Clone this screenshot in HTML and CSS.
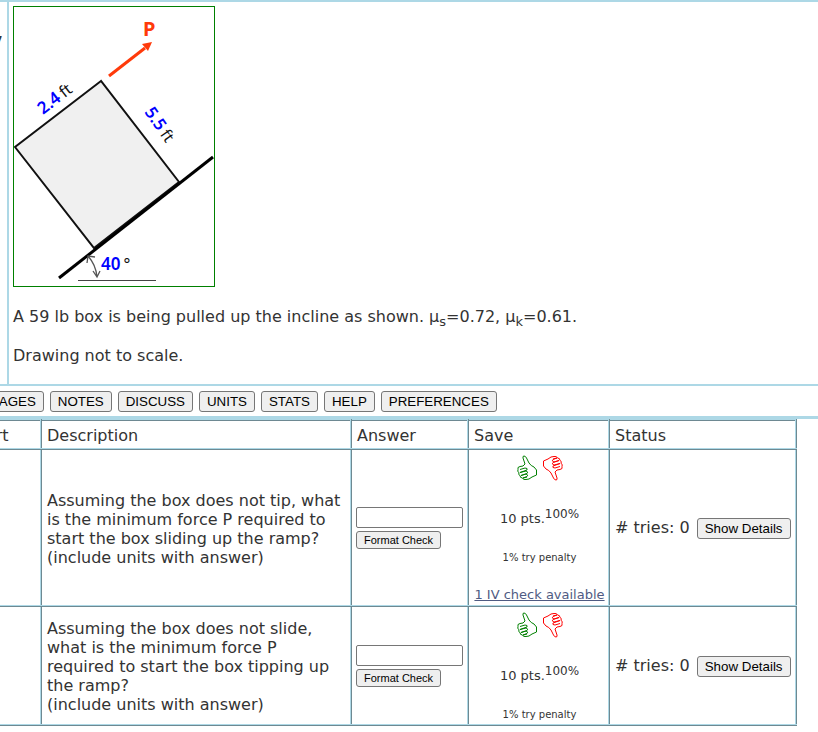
FILE: index.html
```html
<!DOCTYPE html>
<html lang="en">
<head>
    <meta charset="UTF-8" />
    <title>Homework</title>
    <link rel="stylesheet" href="styles.css">
</head>
<body>
    <svg class="defs" aria-hidden="true">
        <symbol id="thumb" viewBox="0 0 20 26">
            <path d="M3 11.500 L6 11 L8 9 L6 3 Q5.500 1 7 1 Q8.500 1 9.500 3 L12 8 Q14 11 17 12 L19.500 15 L19.500 20 L15 22 L12 24 L9 24.500 Q6 25 5.500 23 Q3 23 3 20.500 Q1 20 2 17.500 Q0 17 1 14.500 Q0 12 3 11.500 M3 14.500 L8 13 Q11 13 10 15 L3 17.500 M3 17.500 L9 16 Q12 17 10 18.500 L4 20.500 M4 20.500 L9 19 Q12 20 10 21.500 L6 23 M6 23 L10 22" />
        </symbol>
    </svg>
    <div id="wrap">
        <div class="problem">
            <div class="number">7</div>
            <div class="content">
                <svg class="figure" viewBox="0 0 200 279">
                    <path d="M87 74 L1 140 L80 241 L165 175 Z" fill="#f0f0f0" stroke="#111" stroke-width="2" />
                    <path d="M45 271 L199 150" stroke="#000" stroke-width="3" />
                    <path d="M64 273.500 H142" stroke="#444" />
                    <path d="M95 69 L131 41" stroke="#ff3a0a" stroke-width="3" />
                    <path d="M138 35 L128 37 L134 44 Z" fill="#ff3a0a" />
                    <path d="M74 249 Q82 258 83 270 M73 256 L74 249 L81 250 M79 264 L83 270 L86 264" fill="none" stroke="#555" stroke-width="1.300" />
                    <text class="force" x="129" y="29">P</text>
                    <text class="size" transform="translate(29 108) rotate(-38)">2.4<tspan class="unit" dx="3">ft</tspan></text>
                    <text class="size" transform="translate(130 105) rotate(55)">5.5<tspan class="unit" dx="3">ft</tspan></text>
                    <text class="size" x="87" y="263">40<tspan class="unit" dx="3">°</tspan></text>
                </svg>
                <p>A 59 lb box is being pulled up the incline as shown. μ<sub>s</sub>=0.72, μ<sub>k</sub>=0.61.</p>
                <p>Drawing not to scale.</p>
            </div>
        </div>
        <div class="toolbar">
            <button>MESSAGES</button>
            <button>NOTES</button>
            <button>DISCUSS</button>
            <button>UNITS</button>
            <button>STATS</button>
            <button>HELP</button>
            <button>PREFERENCES</button>
        </div>
        <table>
            <tr>
                <th class="part">Part</th>
                <th class="desc">Description</th>
                <th class="answer">Answer</th>
                <th class="save">Save</th>
                <th class="status">Status</th>
            </tr>
            <tr>
                <td></td>
                <td><label for="a1">Assuming the box does not tip, what is the minimum force P required to start the box sliding up the ramp?<br>(include units with answer)</label></td>
                <td class="entry">
                    <input type="text" id="a1">
                    <button class="format">Format Check</button>
                </td>
                <td class="points">
                    <div class="thumbs">
                        <svg class="up"><use href="#thumb" /></svg>
                        <svg class="down"><use href="#thumb" /></svg>
                    </div>
                    <div class="pts">10 pts.<sup>100%</sup></div>
                    <div class="penalty">1% try penalty</div>
                    <a href="#">1 IV check available</a>
                </td>
                <td class="tries"># tries: 0 <button>Show Details</button></td>
            </tr>
            <tr>
                <td></td>
                <td><label for="a2">Assuming the box does not slide, what is the minimum force P required to start the box tipping up the ramp?<br>(include units with answer)</label></td>
                <td class="entry">
                    <input type="text" id="a2">
                    <button class="format">Format Check</button>
                </td>
                <td class="points">
                    <div class="thumbs">
                        <svg class="up"><use href="#thumb" /></svg>
                        <svg class="down"><use href="#thumb" /></svg>
                    </div>
                    <div class="pts">10 pts.<sup>100%</sup></div>
                    <div class="penalty">1% try penalty</div>
                </td>
                <td class="tries"># tries: 0 <button>Show Details</button></td>
            </tr>
        </table>
    </div>
</body>
</html>
```

FILE: styles.css
```css
body{
    margin: 0;
    overflow: hidden;
    background: #fff;
    color: #333;
    font: 16px/19px Verdana, "DejaVu Sans", sans-serif;
}
.defs{
    position: absolute;
    width: 0;
    height: 0;
}
#wrap{
    margin-left: -30px;
}
.problem{
    display: flex;
    border-top: 2px solid lightblue;
    border-bottom: 2px solid lightblue;
}
.number{
    width: 33px;
    padding: 31px 0 0;
    box-sizing: border-box;
    text-align: right;
    margin-right: 4px;
}
.content{
    flex: 1;
    padding: 4px 4px 0;
    border-left: 2px solid lightblue;
}
.figure{
    display: block;
    width: 200px;
    height: 279px;
    border: 1px solid green;
    font-family: "Noto Sans", sans-serif;
}
.force{
    font-size: 20px;
    font-weight: bold;
    fill: #ff3a0a;
}
.size{
    font-size: 17px;
    font-weight: 600;
    fill: #00f;
}
.unit{
    font-size: 16px;
    font-weight: normal;
    fill: #111;
}
p{
    margin: 20px 0 19px;
}
sub, sup{
    font-size: 13px;
    line-height: 0;
}
button{
    font-family: "Liberation Sans", Arial, sans-serif;
    color: #000;
    background: #efefef;
    border: 1px solid #767676;
    border-radius: 3px;
    padding: 2px 7px;
}
.toolbar{
    display: flex;
    gap: 6px;
    margin-left: -17px;
    padding: 5px 0 4px;
    border-bottom: 3px solid lightblue;
}
table{
    border-collapse: collapse;
}
th, td{
    border: 2px ridge lightblue;
    padding: 5px 3px 3px 5px;
    text-align: left;
    font-weight: normal;
}
.part{
    width: 60px;
}
.desc{
    width: 300px;
}
.answer{
    width: 107px;
}
.save{
    width: 131px;
}
.status{
    width: 177px;
}
.entry{
    padding: 4px;
}
input{
    display: block;
    box-sizing: border-box;
    width: 107px;
    height: 21px;
    border: 1px solid #767676;
    border-radius: 2px;
}
.format{
    display: block;
    margin-top: 3px;
    font-size: 11px;
}
.points{
    text-align: center;
    font-size: 13px;
    line-height: 16px;
}
.points sup{
    font-size: 12px;
}
.thumbs{
    display: flex;
    justify-content: center;
    gap: 6px;
}
.thumbs svg{
    width: 20px;
    height: 26px;
    fill: none;
}
.up{
    stroke: green;
}
.down{
    stroke: red;
    transform: rotate(180deg);
}
.pts{
    margin-top: 30px;
}
.penalty{
    margin-top: 25px;
    font-size: 10px;
    line-height: 12px;
}
.points a{
    display: block;
    margin-top: 24px;
    line-height: 14px;
    white-space: nowrap;
    color: #4f5b83;
}
.tries{
    white-space: nowrap;
}
.tries button{
    margin-left: 2px;
}
```
